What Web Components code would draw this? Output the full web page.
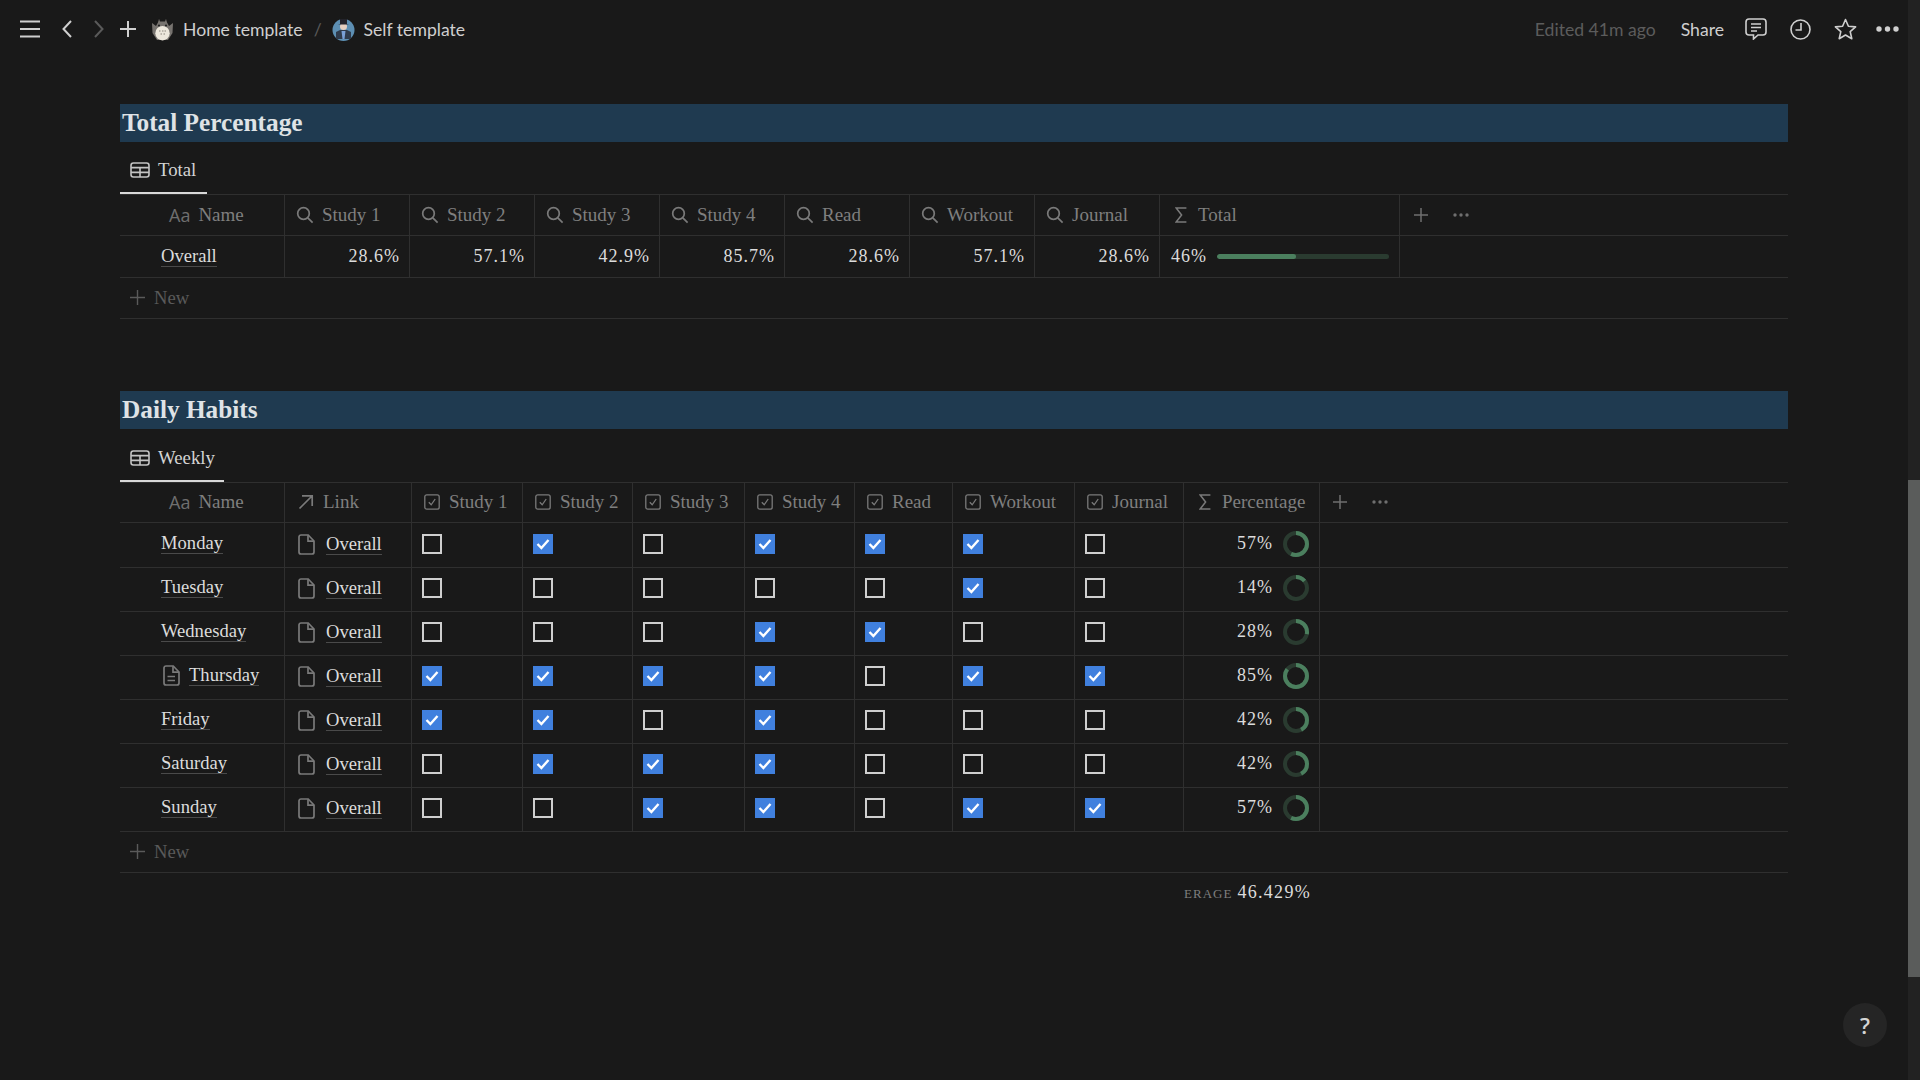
<!DOCTYPE html>
<html lang="en">
<head>
<meta charset="utf-8">
<title>Self template</title>
<style>
  html, body { margin: 0; height: 100%; background: #191919; overflow: hidden; }
  body { font-family: "Liberation Serif", serif; color: #d4d4d4; }
</style>
</head>
<body>
<nd-app>
  <nd-topbar></nd-topbar>

  <nd-section label="Total Percentage" tab="Total" tabwidth="87" tabheight="52" top="46">
    <nd-row cols="165px repeat(7,125px) 240px 1fr" head>
      <nd-head type="name" label="Name"></nd-head>
      <nd-head type="search" label="Study 1"></nd-head>
      <nd-head type="search" label="Study 2"></nd-head>
      <nd-head type="search" label="Study 3"></nd-head>
      <nd-head type="search" label="Study 4"></nd-head>
      <nd-head type="search" label="Read"></nd-head>
      <nd-head type="search" label="Workout"></nd-head>
      <nd-head type="search" label="Journal"></nd-head>
      <nd-head type="sum" label="Total"></nd-head>
      <nd-add></nd-add>
    </nd-row>
    <nd-row cols="165px repeat(7,125px) 240px 1fr">
      <nd-name>Overall</nd-name>
      <nd-num>28.6%</nd-num>
      <nd-num>57.1%</nd-num>
      <nd-num>42.9%</nd-num>
      <nd-num>85.7%</nd-num>
      <nd-num>28.6%</nd-num>
      <nd-num>57.1%</nd-num>
      <nd-num>28.6%</nd-num>
      <nd-progress value="46"></nd-progress>
      <nd-blank></nd-blank>
    </nd-row>
    <nd-new></nd-new>
  </nd-section>

  <nd-section label="Daily Habits" tab="Weekly" tabwidth="104" tabheight="53" top="72">
    <nd-row style="height:41px;--head-lift:2px" cols="165px 127px 111px 110px 112px 110px 98px 122px 109px 136px 1fr" head>
      <nd-head type="name" label="Name"></nd-head>
      <nd-head type="link" label="Link"></nd-head>
      <nd-head type="check" label="Study 1"></nd-head>
      <nd-head type="check" label="Study 2"></nd-head>
      <nd-head type="check" label="Study 3"></nd-head>
      <nd-head type="check" label="Study 4"></nd-head>
      <nd-head type="check" label="Read"></nd-head>
      <nd-head type="check" label="Workout"></nd-head>
      <nd-head type="check" label="Journal"></nd-head>
      <nd-head type="sum" label="Percentage"></nd-head>
      <nd-add narrow></nd-add>
    </nd-row>
    <nd-habit name="Monday" checks="0101110" pct="57" first></nd-habit>
    <nd-habit name="Tuesday" checks="0000010" pct="14"></nd-habit>
    <nd-habit name="Wednesday" checks="0001100" pct="28"></nd-habit>
    <nd-habit name="Thursday" checks="1111011" pct="85" doc></nd-habit>
    <nd-habit name="Friday" checks="1101000" pct="42"></nd-habit>
    <nd-habit name="Saturday" checks="0111000" pct="42"></nd-habit>
    <nd-habit name="Sunday" checks="0011011" pct="57"></nd-habit>
    <nd-new></nd-new>
    <nd-calc label="ERAGE" value="46.429%"></nd-calc>
  </nd-section>
</nd-app>

<script>
const ICONS = {
  name: '',
  search: `<svg width="18" height="18" viewBox="0 0 18 18" fill="none" stroke="#7a7a7a" stroke-width="1.7"><circle cx="7.5" cy="7.5" r="5.8"/><path d="M11.8 11.8 16.6 16.6"/></svg>`,
  link: `<svg width="16" height="16" viewBox="0 0 16 16" fill="none" stroke="#7a7a7a" stroke-width="1.7"><path d="M1.5 14.5 14 2M4 1.8h10.2V12"/></svg>`,
  check: `<svg width="16" height="16" viewBox="0 0 16 16" fill="none" stroke="#7a7a7a" stroke-width="1.3"><rect x=".8" y=".8" width="14.4" height="14.4" rx="2"/><path d="M4.8 8.2 7.2 10.8 11.2 5"/></svg>`,
  sum: `<svg width="12" height="16" viewBox="0 0 12 16" fill="none" stroke="#7a7a7a" stroke-width="1.5"><path d="M11.4 1H1.2L6.6 8 1.2 15H11.4"/></svg>`,
  table: `<svg width="20" height="16" viewBox="0 0 20 16" fill="none" stroke="#c4c4c4" stroke-width="1.6"><rect x="1" y="1" width="18" height="14" rx="2.4"/><path d="M1 5.6H19M1 10.4H19M10 5.6V15"/></svg>`,
  file: `<svg width="17" height="21" viewBox="0 0 17 21" fill="none" stroke="#7a7a7a" stroke-width="1.7"><path d="M3 1H10.2L16 7V18A2 2 0 0 1 14 20H3A2 2 0 0 1 1 18V3A2 2 0 0 1 3 1Z"/><path d="M10 1.2V7.2H16"/></svg>`,
  doc: `<svg width="17" height="21" viewBox="0 0 17 21" fill="none" stroke="#7a7a7a" stroke-width="1.7"><path d="M3 1H10.2L16 7V18A2 2 0 0 1 14 20H3A2 2 0 0 1 1 18V3A2 2 0 0 1 3 1Z"/><path d="M10 1.2V7.2H16M4.5 11.5H12M4.5 15.5H12"/></svg>`
};

class NdElement extends HTMLElement {
  constructor() {
    super();
    this.attachShadow({ mode: 'open' });
  }
  connectedCallback() {
    this.shadowRoot.innerHTML = this.html();
  }
}

class NdApp extends NdElement {
  html() {
    return `
      <style>
        :host { display: grid; grid-template-columns: 1fr 12px; width: 1920px; height: 1080px; overflow: hidden; position: relative; }
        main { display: flex; flex-direction: column; min-width: 0; }
        .track { background: #222; padding-top: 480px; }
        .thumb { height: 497px; background: #5a5c5b; }
        .help { position: absolute; left: 1843px; top: 1003px; width: 44px; height: 44px; border-radius: 50%; background: #252525;
          display: flex; align-items: center; justify-content: center; color: #d4d4d4; font: 600 22px "Open Sans", sans-serif; }
      </style>
      <main><slot></slot></main>
      <div class="track"><div class="thumb"></div></div>
      <div class="help">?</div>`;
  }
}

class NdTopbar extends NdElement {
  html() {
    return `
      <style>
        :host { display: flex; align-items: center; height: 58px; padding: 0 9px 0 20px; box-sizing: border-box; width: 1908px;
          font: 17.6px Lato, sans-serif; color: #cfcfcf; }
        svg { display: block; flex: none; }
        .crumb { white-space: nowrap; }
        .sep { color: #5a5a5a; margin: 0 10px 0 11px; }
        .push { margin-left: auto; }
        .edited { color: #5c5c5c; margin-right: 25px; white-space: nowrap; }
      </style>
      <svg width="20" height="18" viewBox="0 0 20 18" fill="none" stroke="#d0d0d0" stroke-width="2"><path d="M0 1.5H20M0 9H20M0 16.5H20"/></svg>
      <svg style="margin-left:22px" width="10" height="18" viewBox="0 0 10 18" fill="none" stroke="#d0d0d0" stroke-width="2"><path d="M9 1 1.5 9 9 17"/></svg>
      <svg style="margin-left:22px" width="10" height="18" viewBox="0 0 10 18" fill="none" stroke="#5a5a5a" stroke-width="2"><path d="M1 1 8.5 9 1 17"/></svg>
      <svg style="margin-left:16px" width="16" height="16" viewBox="0 0 16 16" fill="none" stroke="#d0d0d0" stroke-width="2"><path d="M8 0V16M0 8H16"/></svg>
      <svg style="margin-left:15px;margin-right:9px" width="23" height="23" viewBox="0 0 23 23">
        <path d="M1 5 5 8 7.5 3.5H15.5L18 8 22 5 21.5 15 17 22H6L1.5 15Z" fill="#77736f"/>
        <path d="M8 .8 9.5 5H7ZM15 .8 16 5H13.5Z" fill="#77736f"/>
        <ellipse cx="11.5" cy="15.2" rx="7.2" ry="7.3" fill="#ece7dc"/>
        <circle cx="8" cy="7.5" r="1.1" fill="#222"/><circle cx="15" cy="7.5" r="1.1" fill="#222"/>
        <path d="M8 13h1.5M11 13h1.5M13.5 13H15M9.5 16H11M12.5 16h1.5" stroke="#8a857c" stroke-width="1"/>
      </svg>
      <span class="crumb">Home template</span>
      <span class="sep">/</span>
      <svg style="margin-right:9px" width="23" height="23" viewBox="0 0 23 23">
        <circle cx="11.5" cy="12" r="11" fill="#5d8fb3"/>
        <path d="M4 21V14L8 12H15L19 14V21Z" fill="#2f3b4c"/>
        <path d="M9.5 13h4l-1 8h-2Z" fill="#7aa0d6"/>
        <circle cx="11.5" cy="8.5" r="3.5" fill="#e6cfc0"/>
        <path d="M8 6V1H15V6L17 6.6H6Z" fill="#23232a"/>
      </svg>
      <span class="crumb">Self template</span>
      <span class="edited push">Edited 41m ago</span>
      <span class="crumb">Share</span>
      <svg style="margin-left:21px" width="22" height="22" viewBox="0 0 22 22" fill="none" stroke="#cfcfcf" stroke-width="1.6"><path d="M4 1H18A3 3 0 0 1 21 4V14A3 3 0 0 1 18 17H13L8.5 21V17H4A3 3 0 0 1 1 14V4A3 3 0 0 1 4 1Z"/><path d="M6 6H16M6 9.5H16M6 13H12"/></svg>
      <svg style="margin-left:23px" width="21" height="21" viewBox="0 0 21 21" fill="none" stroke="#cfcfcf" stroke-width="1.6"><circle cx="10.5" cy="10.5" r="9.5"/><path d="M11 4V11H5.5"/></svg>
      <svg style="margin-left:23px" width="23" height="22" viewBox="0 0 23 22" fill="none" stroke="#cfcfcf" stroke-width="1.6" stroke-linejoin="round"><path d="M11.5 1.5 14.4 8.2 21.6 8.9 16.2 13.6 17.8 20.7 11.5 17 5.2 20.7 6.8 13.6 1.4 8.9 8.6 8.2Z"/></svg>
      <svg style="margin-left:19px" width="23" height="6" viewBox="0 0 23 6" fill="#cfcfcf"><circle cx="3" cy="3" r="2.7"/><circle cx="11.5" cy="3" r="2.7"/><circle cx="20" cy="3" r="2.7"/></svg>`;
  }
}

class NdSection extends NdElement {
  html() {
    const top = this.getAttribute('top');
    const w = this.getAttribute('tabwidth');
    const h = this.getAttribute('tabheight');
    return `
      <style>
        :host { display: block; margin: ${top}px 120px 0; width: 1668px; }
        h2 { margin: 0; height: 38px; padding-left: 2px; background: #1f3a50; color: #dfe3e6;
          font: bold 25.3px/36px "Liberation Serif", serif; }
        .tab { box-sizing: border-box; width: ${w}px; height: ${h}px; padding: 6px 0 0 10px; display: flex; align-items: center; gap: 8px;
          border-bottom: 2px solid #d8d8d8; font-size: 18.8px; color: #d4d4d4; }
        svg { display: block; }
        .rows { display: block; }
      </style>
      <h2>${this.getAttribute('label')}</h2>
      <div class="tab">${ICONS.table}<span>${this.getAttribute('tab')}</span></div>
      <div class="rows"><slot></slot></div>`;
  }
}

class NdRow extends NdElement {
  html() {
    const head = this.hasAttribute('head');
    return `
      <style>
        :host { display: grid; grid-template-columns: ${this.getAttribute('cols')}; box-sizing: border-box;
          height: 42px; border-bottom: 1px solid #2f2f2f; ${head ? 'border-top: 1px solid #2f2f2f;' : ''} }
        ::slotted(*) { box-sizing: border-box; border-right: 1px solid #2f2f2f; }
        ::slotted(:last-child) { border-right: 0; }
      </style>
      <slot></slot>`;
  }
}

class NdHead extends NdElement {
  html() {
    const type = this.getAttribute('type');
    const pad = { name: 12, search: 11, link: 13, check: 12, sum: 15 }[type];
    const gap = { name: 10, search: 8, link: 9, check: 9, sum: 11 }[type];
    return `
      <style>
        :host { display: flex; align-items: center; gap: ${gap}px; padding: 0 0 var(--head-lift, 0) ${pad}px; color: #7f7f7f; font-size: 19px; white-space: nowrap; overflow: hidden; }
        .aa { font: 18px "Open Sans", sans-serif; color: #6f6f6f; margin-left: 37px; margin-right: -2px; }
        svg { display: block; flex: none; }
      </style>
      ${type === 'name' ? '<span class="aa">Aa</span>' : ICONS[type]}
      <span>${this.getAttribute('label')}</span>`;
  }
}

class NdAdd extends NdElement {
  html() {
    const pad = this.hasAttribute('narrow') ? 13 : 14;
    return `
      <style>
        :host { display: flex; align-items: center; padding: 0 0 var(--head-lift, 0) ${pad}px; gap: 25px; }
        svg { display: block; }
      </style>
      <svg width="14" height="14" viewBox="0 0 14 14" stroke="#6f6f6f" stroke-width="1.5"><path d="M7 0V14M0 7H14"/></svg>
      <svg width="16" height="4" viewBox="0 0 16 4" fill="#6f6f6f"><circle cx="2" cy="2" r="1.7"/><circle cx="8" cy="2" r="1.7"/><circle cx="14" cy="2" r="1.7"/></svg>`;
  }
}

class NdName extends NdElement {
  html() {
    const lift = this.hasAttribute('lift') ? 'padding-bottom: 4px;' : '';
    return `
      <style>
        :host { display: flex; align-items: center; padding-left: 41px; font-size: 18.6px; color: #dcdcdc; ${lift} }
        span { border-bottom: 1px solid #4a4a4a; line-height: 20px; }
      </style>
      <span><slot></slot></span>`;
  }
}

class NdNum extends NdElement {
  html() {
    return `
      <style>
        :host { display: flex; align-items: center; justify-content: flex-end; padding-right: 9px; font-size: 18px; letter-spacing: 1px; color: #dcdcdc; }
      </style>
      <slot></slot>`;
  }
}

class NdBlank extends NdElement {
  html() { return `<style>:host { display: block; }</style>`; }
}

class NdProgress extends NdElement {
  html() {
    const v = this.getAttribute('value');
    return `
      <style>
        :host { display: flex; align-items: center; gap: 10px; padding-left: 11px; font-size: 18px; letter-spacing: 1px; color: #dcdcdc; }
        .bar { width: 172px; height: 5px; border-radius: 3px; background: #2a3b30; overflow: hidden; }
        .fill { height: 100%; border-radius: 3px; background: #4b7f5e; }
      </style>
      <span>${v}%</span>
      <div class="bar"><div class="fill" style="width:${v}%"></div></div>`;
  }
}

class NdCheck extends NdElement {
  html() {
    const on = this.hasAttribute('on');
    return `
      <style>
        :host { display: flex; align-items: center; padding: 0 0 var(--lift, 2px) 10px; }
        .box { box-sizing: border-box; width: 20px; height: 20px; display: flex; align-items: center; justify-content: center; }
        .off { border: 2px solid #cfcfcf; }
        .yes { background: #4080de; }
        svg { display: block; }
      </style>
      <div class="box ${on ? 'yes' : 'off'}">${on ? '<svg width="14" height="12" viewBox="0 0 14 12" fill="none" stroke="#fff" stroke-width="2.4"><path d="M1.5 6 5.4 10 12.5 2"/></svg>' : ''}</div>`;
  }
}

class NdRing extends NdElement {
  html() {
    const v = +this.getAttribute('value');
    const c = 2 * Math.PI * 11;
    return `
      <style>
        :host { display: flex; align-items: center; justify-content: flex-end; gap: 10px; padding: 0 10px var(--ring-lift, 2px) 0; font-size: 18px; letter-spacing: 1px; color: #dcdcdc; }
        svg { display: block; flex: none; transform: rotate(-90deg); }
        span { padding-bottom: 1px; }
      </style>
      <span>${v}%</span>
      <svg width="26" height="26" viewBox="0 0 26 26" fill="none" stroke-width="4">
        <circle cx="13" cy="13" r="11" stroke="#2a3b30"/>
        <circle cx="13" cy="13" r="11" stroke="#4b7f5e" stroke-dasharray="${c * v / 100} ${c}"/>
      </svg>`;
  }
}

class NdLink extends NdElement {
  html() {
    return `
      <style>
        :host { display: flex; align-items: center; gap: 11px; padding: 0 0 2px 13px; font-size: 18.6px; color: #dcdcdc; }
        span { border-bottom: 1px solid #4a4a4a; line-height: 20px; }
        svg { display: block; }
      </style>
      ${ICONS.file}<span>Overall</span>`;
  }
}

class NdHabit extends NdElement {
  html() {
    const name = this.getAttribute('name');
    const doc = this.hasAttribute('doc');
    const first = this.hasAttribute('first');
    const rowStyle = first
      ? 'height:45px;--lift:2px;--ring-lift:2px'
      : 'height:44px;--lift:3px;--ring-lift:4px';
    const checks = [...this.getAttribute('checks')]
      .map(c => `<nd-check ${c === '1' ? 'on' : ''}></nd-check>`).join('');
    return `
      <style>
        :host { display: block; }
        .doc { display: flex; align-items: center; gap: 9px; padding: 0 0 4px 43px; font-size: 18.6px; color: #dcdcdc; }
        .doc span { border-bottom: 1px solid #4a4a4a; line-height: 20px; }
        svg { display: block; }
      </style>
      <nd-row style="${rowStyle}" cols="165px 127px 111px 110px 112px 110px 98px 122px 109px 136px 1fr">
        ${doc ? `<div class="doc">${ICONS.doc}<span>${name}</span></div>` : `<nd-name lift>${name}</nd-name>`}
        <nd-link></nd-link>
        ${checks}
        <nd-ring value="${this.getAttribute('pct')}"></nd-ring>
        <nd-blank></nd-blank>
      </nd-row>`;
  }
}

class NdNew extends NdElement {
  html() {
    return `
      <style>
        :host { display: flex; align-items: center; gap: 9px; box-sizing: border-box; height: 41px; padding: 0 0 1px 10px; border-bottom: 1px solid #2f2f2f; color: #5a5a5a; font-size: 18.6px; }
        svg { display: block; }
      </style>
      <svg width="15" height="15" viewBox="0 0 15 15" stroke="#5a5a5a" stroke-width="1.4"><path d="M7.5 0V15M0 7.5H15"/></svg>
      <span>New</span>`;
  }
}

class NdCalc extends NdElement {
  html() {
    return `
      <style>
        :host { display: flex; align-items: baseline; justify-content: flex-end; gap: 5px; width: 1191px; height: 39px; line-height: 39px; color: #dcdcdc; font-size: 18px; letter-spacing: 1.3px; }
        .l { font-size: 13px; color: #7f7f7f; letter-spacing: 1px; }
      </style>
      <span class="l">${this.getAttribute('label')}</span><span>${this.getAttribute('value')}</span>`;
  }
}

customElements.define('nd-app', NdApp);
customElements.define('nd-topbar', NdTopbar);
customElements.define('nd-section', NdSection);
customElements.define('nd-row', NdRow);
customElements.define('nd-head', NdHead);
customElements.define('nd-add', NdAdd);
customElements.define('nd-name', NdName);
customElements.define('nd-num', NdNum);
customElements.define('nd-blank', NdBlank);
customElements.define('nd-progress', NdProgress);
customElements.define('nd-check', NdCheck);
customElements.define('nd-ring', NdRing);
customElements.define('nd-link', NdLink);
customElements.define('nd-habit', NdHabit);
customElements.define('nd-new', NdNew);
customElements.define('nd-calc', NdCalc);
</script>
</body>
</html>
